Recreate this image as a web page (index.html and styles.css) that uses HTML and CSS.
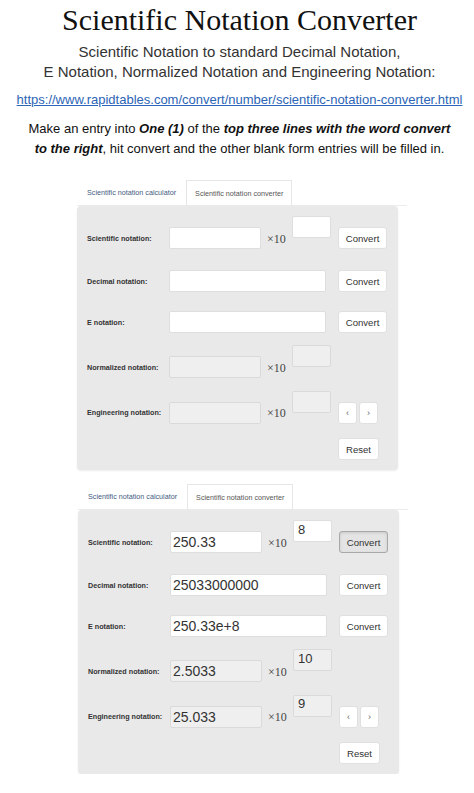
FILE: index.html
```html
<!DOCTYPE html>
<html lang="en">
<head>
<meta charset="utf-8">
<title>Scientific Notation Converter</title>
<link rel="stylesheet" href="styles.css">
</head>
<body>
<header class="intro">
  <h1 class="title">Scientific Notation Converter</h1>
  <p class="subtitle">Scientific Notation to standard Decimal Notation,<br>E Notation, Normalized Notation and Engineering Notation:</p>
  <p class="link-line"><a class="link" href="#">https://www.rapidtables.com/convert/number/scientific-notation-converter.html</a></p>
  <p class="instructions">Make an entry into <b><i>One (1)</i></b> of the <b><i>top three lines with the word convert<br>to the right</i></b>, hit convert and the other blank form entries will be filled in.</p>
</header>

<section class="calc calc-empty">
  <div class="tabs">
    <span class="tab">Scientific notation calculator</span>
    <span class="tab tab-active">Scientific notation converter</span>
  </div>
  <div class="panel">
    <div class="row">
      <span class="label">Scientific notation:</span>
      <input class="field" type="text" value="">
      <span class="times">×10</span>
      <input class="exp" type="text" value="">
      <button class="btn btn-convert">Convert</button>
    </div>
    <div class="row">
      <span class="label">Decimal notation:</span>
      <input class="field field-wide" type="text" value="">
      <button class="btn btn-convert btn-far">Convert</button>
    </div>
    <div class="row">
      <span class="label">E notation:</span>
      <input class="field field-wide" type="text" value="">
      <button class="btn btn-convert btn-far">Convert</button>
    </div>
    <div class="row">
      <span class="label">Normalized notation:</span>
      <input class="field field-off" type="text" value="" readonly>
      <span class="times">×10</span>
      <input class="exp exp-off" type="text" value="" readonly>
    </div>
    <div class="row">
      <span class="label">Engineering notation:</span>
      <input class="field field-off" type="text" value="" readonly>
      <span class="times">×10</span>
      <input class="exp exp-off" type="text" value="" readonly>
      <div class="arrows">
        <button class="btn btn-arrow">‹</button>
        <button class="btn btn-arrow">›</button>
      </div>
    </div>
    <div class="row row-reset">
      <button class="btn btn-reset">Reset</button>
    </div>
  </div>
</section>

<section class="calc calc-filled">
  <div class="tabs">
    <span class="tab">Scientific notation calculator</span>
    <span class="tab tab-active">Scientific notation converter</span>
  </div>
  <div class="panel">
    <div class="row">
      <span class="label">Scientific notation:</span>
      <input class="field" type="text" value="250.33">
      <span class="times">×10</span>
      <input class="exp" type="text" value="8">
      <button class="btn btn-convert btn-pressed">Convert</button>
    </div>
    <div class="row">
      <span class="label">Decimal notation:</span>
      <input class="field field-wide" type="text" value="25033000000">
      <button class="btn btn-convert btn-far">Convert</button>
    </div>
    <div class="row">
      <span class="label">E notation:</span>
      <input class="field field-wide" type="text" value="250.33e+8">
      <button class="btn btn-convert btn-far">Convert</button>
    </div>
    <div class="row">
      <span class="label">Normalized notation:</span>
      <input class="field field-off" type="text" value="2.5033" readonly>
      <span class="times">×10</span>
      <input class="exp exp-off" type="text" value="10" readonly>
    </div>
    <div class="row">
      <span class="label">Engineering notation:</span>
      <input class="field field-off" type="text" value="25.033" readonly>
      <span class="times">×10</span>
      <input class="exp exp-off" type="text" value="9" readonly>
      <div class="arrows">
        <button class="btn btn-arrow">‹</button>
        <button class="btn btn-arrow">›</button>
      </div>
    </div>
    <div class="row row-reset">
      <button class="btn btn-reset">Reset</button>
    </div>
  </div>
</section>
</body>
</html>
```

FILE: styles.css
```css
* { box-sizing: border-box; }

body {
  margin: 0;
  background: #fff;
  font-family: "Liberation Sans", Arial, sans-serif;
  color: #222;
}

.intro {
  padding-left: 5px;
  text-align: center;
}

.title {
  margin: 4px 0 0;
  font-family: "Liberation Serif", "Times New Roman", serif;
  font-weight: normal;
  font-size: 30px;
  line-height: 31px;
  color: #111;
}

.subtitle {
  margin: 7px 0 0;
  font-size: 15px;
  line-height: 20px;
  color: #333;
}

.link-line {
  margin: 10px 0 0;
  font-size: 13px;
  line-height: 16px;
}

.link {
  color: #2c64b6;
  text-decoration: underline;
}

.instructions {
  margin: 11px 0 0;
  font-size: 13px;
  line-height: 20px;
  color: #111;
}

.calc {
  width: 330px;
  margin-left: 77px;
}

.calc-empty { margin-top: 21px; }
.calc-filled { margin-top: 14px; margin-left: 78px; }

.tabs {
  display: flex;
  height: 26px;
  border-bottom: 1px solid #ececec;
}

.tab {
  display: flex;
  align-items: center;
  padding: 0 10px;
  font-size: 7.2px;
  color: #3f5b82;
  white-space: nowrap;
}

.tab-active {
  background: #fff;
  border: 1px solid #e6e6e6;
  border-bottom: none;
  padding: 0 8px;
  color: #555;
}

.panel {
  width: 321px;
  background: #e9e9e9;
  border-radius: 4px;
  box-shadow: 0 1px 2px rgba(0, 0, 0, 0.08);
  padding: 10px 10px 10px 10px;
  display: grid;
  grid-template-rows: 44px 42px 40px 50px 41px auto;
}

.row {
  display: flex;
  align-items: center;
}

.row-reset {
  margin-top: 5px;
  padding-left: 251px;
}

.label {
  width: 82px;
  font-size: 7.2px;
  font-weight: bold;
  color: #333;
  white-space: nowrap;
}

.field, .exp {
  height: 22px;
  border: 1px solid #dedede;
  border-radius: 2px;
  background: #fff;
  font-family: "Liberation Sans", Arial, sans-serif;
  color: #333;
  outline: none;
}

.field {
  width: 92px;
  padding: 0 2px;
  font-size: 14px;
}

.field-wide { width: 157px; }

.field-off, .exp-off {
  background: #efefef;
  border-color: #dadada;
}

.times {
  width: 31px;
  padding: 2px 0 0 6px;
  font-family: "Liberation Serif", "Times New Roman", serif;
  font-size: 12px;
  color: #444;
}

.exp {
  width: 39px;
  margin-bottom: 22px;
  padding: 0 4px 4px;
  font-size: 13px;
}

.btn {
  height: 22px;
  border: 1px solid #e0e0e0;
  border-radius: 3px;
  background: #fff;
  font-family: "Liberation Sans", Arial, sans-serif;
  color: #333;
  padding: 0;
}

.btn-convert {
  width: 49px;
  margin-left: 7px;
  font-size: 9.6px;
}

.btn-far { margin-left: 12px; }

.btn-pressed {
  background: #e4e4e4;
  border-color: #a8a8a8;
  box-shadow: inset 0 1px 3px rgba(0, 0, 0, 0.12);
}

.arrows {
  display: flex;
  gap: 2px;
  margin-left: 7px;
}

.btn-arrow {
  width: 19px;
  font-size: 9px;
  color: #666;
}

.btn-reset {
  width: 41px;
  font-size: 9.6px;
}
```
